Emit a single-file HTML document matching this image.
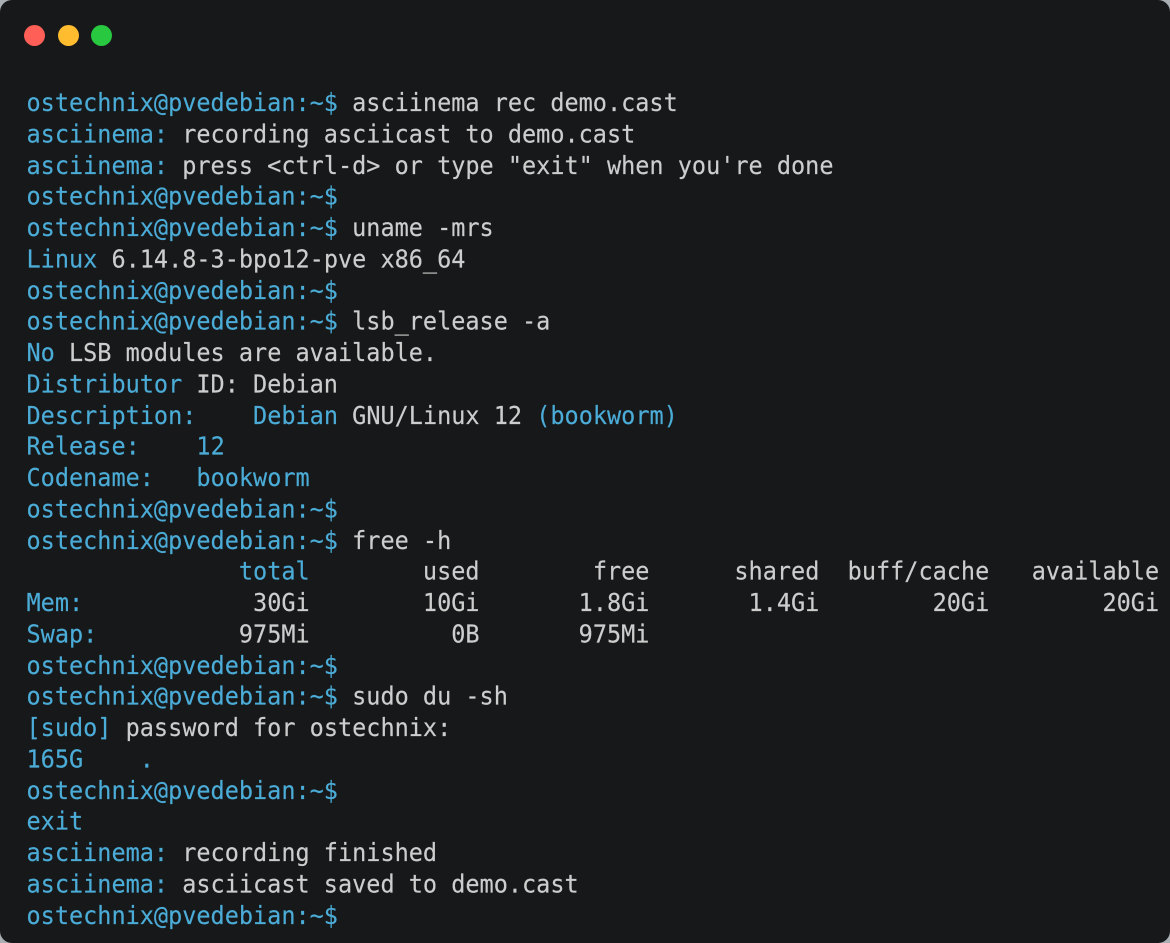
<!DOCTYPE html>
<html><head><meta charset="utf-8"><style>
html,body{margin:0;padding:0;width:1170px;height:943px;overflow:hidden;background:#a9afb2}
#w{position:absolute;left:0;top:0;width:1170px;height:943px;background:#17181a;border-radius:12px;overflow:hidden}
.d{position:absolute;top:24.5px;width:21px;height:21px;border-radius:50%}
pre{position:absolute;left:26.5px;top:87.5px;margin:0;white-space:pre;line-height:29.743px;font-family:"DejaVu Sans Mono","Liberation Mono",monospace;font-size:23.53px;color:#cdcdcd;transform:scaleY(1.05);transform-origin:0 0;filter:blur(.3px);-webkit-text-stroke:.15px currentColor}
b{font-weight:normal;color:#4bacd7}
</style></head><body><div id="w">
<div class="d" style="left:24px;background:#ff5f57"></div>
<div class="d" style="left:57.5px;background:#febc2e"></div>
<div class="d" style="left:91px;background:#28c840"></div>
<pre><b>ostechnix@pvedebian:~$</b> asciinema rec demo.cast
<b>asciinema:</b> recording asciicast to demo.cast
<b>asciinema:</b> press &lt;ctrl-d&gt; or type "exit" when you're done
<b>ostechnix@pvedebian:~$</b>
<b>ostechnix@pvedebian:~$</b> uname -mrs
<b>Linux</b> 6.14.8-3-bpo12-pve x86_64
<b>ostechnix@pvedebian:~$</b>
<b>ostechnix@pvedebian:~$</b> lsb_release -a
<b>No</b> LSB modules are available.
<b>Distributor</b> ID: Debian
<b>Description:</b>    <b>Debian</b> GNU/Linux 12 <b>(bookworm)</b>
<b>Release:</b>    <b>12</b>
<b>Codename:</b>   <b>bookworm</b>
<b>ostechnix@pvedebian:~$</b>
<b>ostechnix@pvedebian:~$</b> free -h
               <b>total</b>        used        free      shared  buff/cache   available
<b>Mem:</b>            30Gi        10Gi       1.8Gi       1.4Gi        20Gi        20Gi
<b>Swap:</b>          975Mi          0B       975Mi
<b>ostechnix@pvedebian:~$</b>
<b>ostechnix@pvedebian:~$</b> sudo du -sh
<b>[sudo]</b> password for ostechnix:
<b>165G    .</b>
<b>ostechnix@pvedebian:~$</b>
<b>exit</b>
<b>asciinema:</b> recording finished
<b>asciinema:</b> asciicast saved to demo.cast
<b>ostechnix@pvedebian:~$</b></pre>
</div></body></html>
